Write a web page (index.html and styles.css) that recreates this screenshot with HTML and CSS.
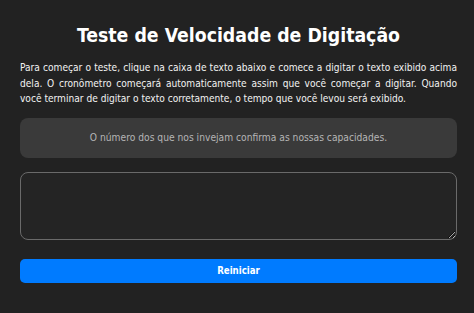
FILE: index.html
```html
<!DOCTYPE html>
<html lang="pt">
<head>
<meta charset="utf-8">
<title>Teste de Velocidade de Digitação</title>
<link rel="stylesheet" href="styles.css">
</head>
<body>
<main class="container">
  <h1 class="title">Teste de Velocidade de Digitação</h1>
  <p class="intro">Para começar o teste, clique na caixa de texto abaixo e comece a digitar o texto exibido acima dela. O cronômetro começará automaticamente assim que você começar a digitar. Quando você terminar de digitar o texto corretamente, o tempo que você levou será exibido.</p>
  <div class="quote">O número dos que nos invejam confirma as nossas capacidades.</div>
  <textarea class="input"></textarea>
  <button class="restart" type="button">Reiniciar</button>
</main>
</body>
</html>
```
FILE: styles.css
```css
html, body {
  margin: 0;
  padding: 0;
  background: #222222;
}
body {
  font-family: "DejaVu Sans Condensed", "DejaVu Sans", sans-serif;
  font-stretch: condensed;
  color: #ffffff;
}
.container {
  display: flex;
  flex-direction: column;
  padding: 22px 17px 0 20px;
}
.title {
  margin: 0;
  font-size: 19.3px;
  line-height: 28px;
  font-weight: bold;
  text-align: center;
}
.intro {
  margin: 10px 0 0;
  font-size: 10.1px;
  line-height: 15.5px;
  text-align: justify;
  color: #f2f2f2;
}
.quote {
  margin-top: 11px;
  height: 40px;
  display: flex;
  align-items: center;
  justify-content: center;
  background: #3a3a3a;
  border-radius: 8px;
  font-size: 10.2px;
  color: #b5b5b5;
}
.input {
  margin-top: 14px;
  height: 68px;
  box-sizing: border-box;
  background: #242424;
  border: 1px solid #6a6a6a;
  border-radius: 8px;
  resize: vertical;
  color: #fff;
}
.restart {
  margin-top: 19px;
  height: 24px;
  border: none;
  border-radius: 5px;
  background: #007bff;
  color: #ffffff;
  font-family: inherit;
  font-stretch: condensed;
  font-size: 9.6px;
  font-weight: bold;
}
```
